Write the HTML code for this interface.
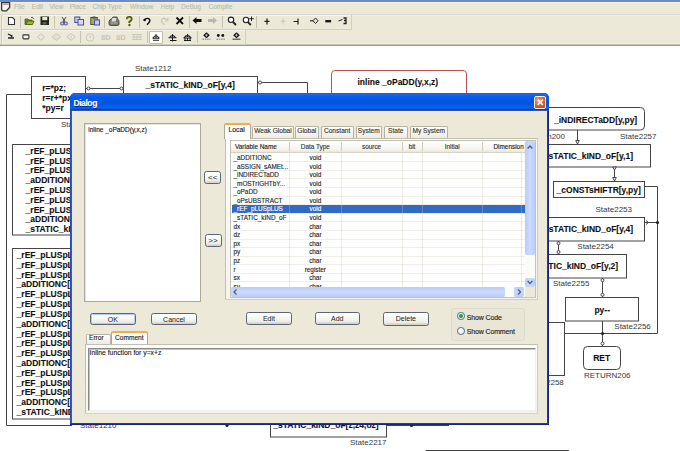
<!DOCTYPE html>
<html><head><meta charset="utf-8">
<style>
*{box-sizing:border-box;margin:0;padding:0}
html,body{width:680px;height:451px;overflow:hidden;background:#fff;font-family:"Liberation Sans",sans-serif}
.abs{position:absolute}
#chrome{position:absolute;left:0;top:0;width:680px;height:46px;background:#ECE9D8}
.t{position:absolute;white-space:nowrap;line-height:1;-webkit-text-stroke:0.12px currentColor}
</style></head><body>
<div id="chrome">
  <div class="abs" style="left:0;top:0;width:680px;height:2px;background:#6F8BC6"></div><div class="abs" style="left:0;top:2px;width:680px;height:1px;background:#F2F1EA"></div>
  <div class="abs" style="left:0;top:45px;width:680px;height:1px;background:#9C9A8C"></div>
  <div class="abs" style="left:0;top:44px;width:680px;height:1px;background:#C8C5B4"></div>
  <div class="t" style="left:14.1px;top:3.9px;font-size:6.5px;color:#BDBAAA">File</div>
  <div class="t" style="left:31.8px;top:3.9px;font-size:6.5px;color:#BDBAAA">Edit</div>
  <div class="t" style="left:49.4px;top:3.9px;font-size:6.5px;color:#BDBAAA">View</div>
  <div class="t" style="left:69.7px;top:3.9px;font-size:6.5px;color:#BDBAAA">Place</div>
  <div class="t" style="left:92.6px;top:3.9px;font-size:6.5px;color:#BDBAAA">Chip Type</div>
  <div class="t" style="left:130.0px;top:3.9px;font-size:6.5px;color:#BDBAAA">Window</div>
  <div class="t" style="left:160.7px;top:3.9px;font-size:6.5px;color:#BDBAAA">Help</div>
  <div class="t" style="left:181.1px;top:3.9px;font-size:6.5px;color:#BDBAAA">DeBug</div>
  <div class="t" style="left:208.5px;top:3.9px;font-size:6.5px;color:#BDBAAA">Compile</div>
  <svg class="abs" style="left:0;top:0" width="12" height="13"><path d="M1.6 2.6 H9.6 V7.5 L6.5 10.8 H2.5 L1.6 9.8 Z" fill="#F4F6F2" stroke="#2E3E3E" stroke-width="1.3"/><path d="M2.4 3.3 H8.8 V5 H2.4Z" fill="#D89A98"/></svg>
  <div class="abs" style="left:0;top:13.6px;width:680px;height:1.2px;background:#D9DACB"></div><div class="abs" style="left:0;top:14.8px;width:680px;height:0.8px;background:#F1F0E4"></div>
  <div class="abs" style="left:1.5px;top:14.5px;width:350.5px;height:15px;border-right:1px solid #D2CFC0;border-bottom:1px solid #D2CFC0;box-shadow:inset 1px 1px 0 #F6F4EC"></div>
  <div class="abs" style="left:1.5px;top:29.5px;width:244px;height:15px;border-right:1px solid #D2CFC0;border-bottom:1px solid #D2CFC0;box-shadow:inset 1px 1px 0 #F6F4EC"></div>
  <div class="abs" style="left:1px;top:14.5px;width:1px;height:30px;background:#C9C6B6"></div>
  <div class="abs" style="left:19.5px;top:16px;width:1px;height:12px;background:#C5C2B2"></div>
  <div class="abs" style="left:53.9px;top:16px;width:1px;height:12px;background:#C5C2B2"></div>
  <div class="abs" style="left:104.2px;top:16px;width:1px;height:12px;background:#C5C2B2"></div>
  <div class="abs" style="left:139.1px;top:16px;width:1px;height:12px;background:#C5C2B2"></div>
  <div class="abs" style="left:188.5px;top:16px;width:1px;height:12px;background:#C5C2B2"></div>
  <div class="abs" style="left:222.3px;top:16px;width:1px;height:12px;background:#C5C2B2"></div>
  <div class="abs" style="left:256.0px;top:16px;width:1px;height:12px;background:#C5C2B2"></div>
  <div class="abs" style="left:80.3px;top:31px;width:1px;height:12px;background:#C5C2B2"></div>
  <div class="abs" style="left:147.1px;top:31px;width:1px;height:12px;background:#C5C2B2"></div>
  <div class="abs" style="left:197.2px;top:31px;width:1px;height:12px;background:#C5C2B2"></div>
  <div class="abs" style="left:148.8px;top:31px;width:14px;height:13.2px;background:#FCFCF9;border:1px solid #C2BFAF;border-radius:1px"></div>
  <svg class="abs" style="left:6.5px;top:15.9px" width="9" height="10"><path d="M1.5 1.5 H5.5 L7.5 3.5 V8.5 H1.5 Z" fill="#fff" stroke="#333" stroke-width="1.1"/></svg>
  <svg class="abs" style="left:24.0px;top:15.9px" width="11" height="10"><path d="M1 3 H4 L5 4 H8 V8.5 H1Z" fill="#6F8A1C" stroke="#4A5A10" stroke-width="0.8"/><path d="M2 8.5 L3.5 5 H10 L8.5 8.5Z" fill="#9CB82A" stroke="#4A5A10" stroke-width="0.8"/><path d="M7 1.5 Q9 0.5 9.5 3" stroke="#333" fill="none" stroke-width="0.8"/></svg>
  <svg class="abs" style="left:40.0px;top:15.9px" width="10" height="10"><rect x="0.5" y="0.5" width="8.5" height="8.5" fill="#1E2416"/><rect x="2.3" y="1" width="5" height="3.2" fill="#E8E8D8"/><rect x="2.5" y="6" width="4" height="2.5" fill="#5A5A50"/></svg>
  <svg class="abs" style="left:60.0px;top:15.9px" width="8" height="10"><path d="M2 1 L5 6 M6 1 L3 6" stroke="#445" stroke-width="1"/><circle cx="2.2" cy="7.5" r="1.5" fill="none" stroke="#5A5A9A" stroke-width="1.2"/><circle cx="5.8" cy="7.5" r="1.5" fill="none" stroke="#5A5A9A" stroke-width="1.2"/></svg>
  <svg class="abs" style="left:74.0px;top:15.9px" width="11" height="10"><rect x="0.8" y="1" width="5" height="5.5" fill="#C8C8F0" stroke="#505098" stroke-width="1"/><rect x="4" y="3.5" width="5.5" height="5.5" fill="#D8D8F8" stroke="#505098" stroke-width="1"/></svg>
  <svg class="abs" style="left:89.5px;top:15.9px" width="11" height="10"><rect x="0.8" y="1.5" width="6.5" height="7" fill="#A8A878" stroke="#505030" stroke-width="1"/><rect x="2.5" y="0.5" width="3" height="2" fill="#505030"/><rect x="4.5" y="4" width="5" height="5" fill="#C8C8F0" stroke="#505098" stroke-width="1"/></svg>
  <svg class="abs" style="left:107.5px;top:15.9px" width="12" height="11"><path d="M1 6 Q1 3.5 3.5 3 L5 1 H9 L9.5 3 Q11 3.8 11 6 V8 Q11 9.5 9 9.5 H3 Q1 9.5 1 8Z" fill="#7A7A76" stroke="#454542" stroke-width="0.9"/><path d="M4.5 2 H8.5 L7.5 5.5 H3.5Z" fill="#E2E2DC"/><path d="M2.5 7 H9.5" stroke="#B8B8B2" stroke-width="0.8"/></svg>
  <svg class="abs" style="left:125px;top:15.9px" width="9" height="11"><path d="M1.8 3.2 Q1.8 0.9 4.2 0.9 Q6.8 0.9 6.6 3.2 Q6.4 4.8 4.4 5.6 V7" stroke="#5A6018" stroke-width="2" fill="none"/><circle cx="4.4" cy="9" r="1.2" fill="#5A6018"/><path d="M2.8 3 Q3 1.8 4.3 1.8 Q5.5 1.9 5.5 3" stroke="#C8C840" stroke-width="0.8" fill="none"/></svg>
  <svg class="abs" style="left:143.3px;top:16.6px" width="9" height="9"><circle cx="1.6" cy="3" r="1.3" fill="#111"/><path d="M1.8 2.6 Q4 0.6 6 1.8 Q7.6 3.2 6 5.5 L4 7.8" stroke="#111" stroke-width="1.4" fill="none"/></svg>
  <svg class="abs" style="left:159.5px;top:16.6px" width="9" height="9"><path d="M6.6 2.6 Q4.4 0.6 2.4 1.8 Q0.8 3.2 2.4 5.5 L4.4 7.8" stroke="#C2C0B4" stroke-width="1.1" fill="none"/><path d="M7.8 1 V4 H5" stroke="#C2C0B4" stroke-width="1" fill="none"/></svg>
  <svg class="abs" style="left:174.5px;top:16.4px" width="10" height="10"><path d="M1.5 1.5 L8 8 M8 1.5 L1.5 8" stroke="#111" stroke-width="1.8"/></svg>
  <svg class="abs" style="left:192.0px;top:16.4px" width="11" height="9"><path d="M0.5 4.5 L4.5 1 V3 H9.5 V6 H4.5 V8Z" fill="#111"/></svg>
  <svg class="abs" style="left:207.0px;top:16.4px" width="11" height="9"><path d="M10 4.5 L6 1 V3 H1 V6 H6 V8Z" fill="#B9B7AC"/></svg>
  <svg class="abs" style="left:226.5px;top:16.4px" width="11" height="10"><circle cx="4" cy="3.8" r="2.7" fill="#fff" stroke="#222" stroke-width="1.1"/><path d="M6 6 L9 9" stroke="#222" stroke-width="1.8"/></svg>
  <svg class="abs" style="left:241.5px;top:16.4px" width="12" height="10"><circle cx="4" cy="4" r="2.7" fill="#fff" stroke="#222" stroke-width="1.1"/><path d="M6 6.2 L8.8 9" stroke="#222" stroke-width="1.8"/><path d="M9.5 0.5 V5 M7.3 2.7 H11.7" stroke="#222" stroke-width="1"/></svg>
  <svg class="abs" style="left:263.5px;top:17.9px" width="6" height="7"><path d="M3 0.5 V6.5 M0.5 3.3 H5.5" stroke="#222" stroke-width="1.3"/></svg>
  <svg class="abs" style="left:279.5px;top:17.9px" width="6" height="7"><path d="M3 0.5 V6.5 M0.5 3.3 H5.5" stroke="#C8C6B8" stroke-width="1"/></svg>
  <svg class="abs" style="left:293.0px;top:17.9px" width="7" height="7"><path d="M5 0.5 V6.5 M0.5 3.5 H5" stroke="#222" stroke-width="1.2"/></svg>
  <svg class="abs" style="left:309.5px;top:17.4px" width="9" height="8"><path d="M0 3.8 H3" stroke="#222" stroke-width="1.1"/><path d="M5.5 1 L8 3.8 L5.5 6.5 L3 3.8Z" fill="none" stroke="#222" stroke-width="1"/></svg>
  <svg class="abs" style="left:325.0px;top:18.9px" width="7" height="5"><rect x="0.3" y="1" width="5.8" height="2.4" fill="#1a1a1a"/></svg>
  <svg class="abs" style="left:338.0px;top:17.4px" width="10" height="8"><path d="M0.5 4 L4.5 2.5" stroke="#222" stroke-width="1"/><path d="M5.5 1 H8 V3.5 H6 M8 3.5 V6.5 H5.5" stroke="#222" stroke-width="1.3" fill="none"/></svg>
  <svg class="abs" style="left:6.5px;top:32.5px" width="8" height="6"><path d="M1 1 L5 3 L4 4 M1 5 H7" stroke="#222" stroke-width="1.3" fill="none"/></svg>
  <svg class="abs" style="left:21.5px;top:33.5px" width="8" height="6"><rect x="0.9" y="0.9" width="6" height="4" rx="0.8" fill="#F4F3EE" stroke="#333" stroke-width="1.1"/></svg>
  <svg class="abs" style="left:37.0px;top:32.5px" width="8" height="8"><path d="M4 0.7 L7.3 4 L4 7.3 L0.7 4Z" fill="none" stroke="#C6C4B6" stroke-width="1"/></svg>
  <svg class="abs" style="left:51.0px;top:32.5px" width="11" height="8"><path d="M5.5 0.7 L9.8 4 L5.5 7.3 L1.2 4Z" fill="none" stroke="#C6C4B6" stroke-width="1"/><path d="M5.5 2 L7.5 4 L5.5 6 L3.5 4Z" fill="none" stroke="#D0CEC0" stroke-width="0.8"/></svg>
  <svg class="abs" style="left:66.0px;top:32.5px" width="10" height="8"><path d="M5 0.7 L9.3 4 L5 7.3 L0.7 4Z" fill="none" stroke="#C6C4B6" stroke-width="1"/><path d="M5 3 V5" stroke="#C6C4B6"/></svg>
  <svg class="abs" style="left:85.0px;top:32.5px" width="11" height="9"><circle cx="5" cy="4.5" r="3.8" fill="none" stroke="#CAC8BA" stroke-width="1"/><path d="M5 2.5 V4.5 H6.5" stroke="#CAC8BA" stroke-width="0.8" fill="none"/></svg>
  <svg class="abs" style="left:100.5px;top:33.0px" width="10" height="8"><text x="0" y="7" font-size="7.5" font-weight="bold" fill="#C6C4B6" font-family="Liberation Sans">8D</text></svg>
  <svg class="abs" style="left:116.0px;top:33.0px" width="10" height="8"><text x="0" y="7" font-size="7.5" font-weight="bold" fill="#C6C4B6" font-family="Liberation Sans">8D</text></svg>
  <svg class="abs" style="left:130.5px;top:33.0px" width="12" height="8"><path d="M1 1.5 H11 M1 4 H11 M1 6.5 H11 M3 1.5 V6.5 M6 1.5 V6.5 M9 1.5 V6.5" stroke="#CAC8BA" stroke-width="1"/></svg>
  <svg class="abs" style="left:152.0px;top:33.0px" width="9" height="9"><path d="M1 5 Q4 0.5 7 5" fill="none" stroke="#1a1a1a" stroke-width="1.2"/><path d="M4 1 V5" stroke="#1a1a1a" stroke-width="1"/><path d="M0.5 5.3 H7.5 M1 7.3 H7" stroke="#1a1a1a" stroke-width="1.1"/></svg>
  <svg class="abs" style="left:167.5px;top:33.0px" width="9" height="9"><path d="M1.5 4.5 Q4.5 0.5 7.5 4.5" fill="none" stroke="#1a1a1a" stroke-width="1.1"/><path d="M4.5 1 V8.5" stroke="#1a1a1a" stroke-width="1"/><path d="M0.5 4.8 H8.5 M2 7.5 H8.5" stroke="#1a1a1a" stroke-width="1.1"/></svg>
  <svg class="abs" style="left:182.5px;top:33.0px" width="9" height="9"><path d="M1 4.8 Q4.5 0.5 8 4.8" fill="none" stroke="#1a1a1a" stroke-width="1.1"/><path d="M4.5 1 V4" stroke="#1a1a1a"/><path d="M0.5 5 H8.5 M1 7.5 H8 M2 5 V7.5 M4.5 5 V7.5 M7 5 V7.5" stroke="#1a1a1a" stroke-width="1"/></svg>
  <svg class="abs" style="left:201.5px;top:32.0px" width="9" height="11"><path d="M4.5 0.2 L7.8 3.2 L4.5 6.2 L1.2 3.2Z" fill="#111"/><path d="M4.5 1.8 V4.6 M3.1 3.2 H5.9" stroke="#fff" stroke-width="0.6"/><path d="M0.5 7.2 H8.5" stroke="#555" stroke-width="0.8" stroke-dasharray="1.5 0.8"/></svg>
  <svg class="abs" style="left:216.0px;top:32.5px" width="10" height="9"><circle cx="2.3" cy="2.5" r="1.4" fill="#111"/><circle cx="6.8" cy="2.5" r="1.4" fill="#111"/><path d="M0.5 6.2 H9.5" stroke="#555" stroke-width="0.8" stroke-dasharray="1.5 0.8"/></svg>
  <svg class="abs" style="left:231.5px;top:32.0px" width="9" height="11"><path d="M4.5 0.2 L7.8 3.2 L4.5 6.2 L1.2 3.2Z" fill="#111"/><path d="M4.5 1.8 V4.6 M3.1 3.2 H5.9" stroke="#fff" stroke-width="0.6"/><path d="M0.5 7.2 H8.5" stroke="#444" stroke-width="1.1"/></svg>
</div>

<svg width="680" height="451" style="position:absolute;left:0;top:0" font-family="Liberation Sans">
<g fill="none" stroke="#454545" stroke-width="1">
<polyline points="6.5,425.5 6.5,94.5 31.5,94.5"/>
<line x1="6.5" y1="425.5" x2="72" y2="425.5"/>
<rect x="31.5" y="76.5" width="54" height="42"/>
<line x1="85.5" y1="88.5" x2="123.5" y2="88.5"/>
<rect x="123.5" y="76.5" width="134" height="30"/>
<polyline points="257.5,82.5 307.5,82.5 307.5,95"/>
<rect x="12.5" y="144.5" width="70" height="90.5"/>
<rect x="12.5" y="248.5" width="70" height="170.5"/>
</g>
<rect x="331.5" y="70.5" width="135" height="40" rx="3.5" fill="none" stroke="#C0504D"/>
<g fill="none" stroke="#454545" stroke-width="1">
<rect x="520.5" y="107.5" width="124" height="22.5" rx="4"/>
<line x1="577.5" y1="130" x2="577.5" y2="144"/>
<rect x="520.5" y="144.5" width="130" height="22.5"/>
<line x1="614.5" y1="167" x2="614.5" y2="181"/>
<rect x="553.5" y="181.5" width="91" height="16"/>
<polyline points="644.5,186.5 657.5,186.5 657.5,333.5 564.5,333.5"/>
<rect x="520.5" y="217.5" width="124" height="23.5"/>
<line x1="644.5" y1="222.5" x2="657.5" y2="222.5"/>
<line x1="558.5" y1="241" x2="558.5" y2="254.5"/>
<rect x="520.5" y="254.5" width="106" height="23.5"/>
<line x1="602.5" y1="278" x2="602.5" y2="297.5"/>
<rect x="565.5" y="297.5" width="73" height="23.5"/>
<line x1="602.5" y1="321" x2="602.5" y2="346.5"/>
<rect x="520.5" y="322.5" width="44" height="53"/>
<rect x="583.5" y="346.5" width="37" height="23" rx="4"/>
<rect x="270.5" y="410.5" width="116" height="26.5"/>
<line x1="425.5" y1="450.5" x2="569" y2="450.5"/>
<line x1="386.5" y1="425.2" x2="449" y2="425.2" stroke="#2E3C8C" stroke-width="1.6"/>
<path d="M575.7 140.5 L579.3 140.5 L577.5 144.0 Z" fill="#fff"/>
<path d="M612.7 177.5 L616.3 177.5 L614.5 181.0 Z" fill="#fff"/>
<path d="M612.7 167.0 L616.3 167.0 L614.5 170.0 Z" fill="#fff"/>
<circle cx="558.5" cy="243.2" r="1.5" fill="#fff"/>
<circle cx="558.5" cy="252.0" r="1.5" fill="#fff"/>
<circle cx="602.5" cy="280.2" r="1.5" fill="#fff"/>
<circle cx="602.5" cy="294.8" r="1.5" fill="#fff"/>
<circle cx="602.5" cy="343.5" r="1.5" fill="#fff"/>
<circle cx="88.5" cy="88.5" r="1.5" fill="#fff"/>
<circle cx="121.5" cy="88.5" r="1.5" fill="#fff"/>
<circle cx="260.0" cy="82.5" r="1.5" fill="#fff"/>
<path d="M646 220.5 L648.5 222.5 L646 224.5"/>
</g>
<g fill="#222">
<circle cx="657.5" cy="222.5" r="1.6"/>
<circle cx="602.5" cy="333.5" r="1.6"/>
<circle cx="411.5" cy="425.5" r="1.6"/>
<circle cx="227.0" cy="425.5" r="1.6"/>
</g>
<g font-size="8" fill="#383838">
<text x="135.0" y="71.0">State1212</text>
<text x="61.0" y="127.0">State1211</text>
<text x="620.0" y="138.5">State2257</text>
<text x="565" y="138.5" text-anchor="end">Station200</text>
<text x="595.5" y="212.3">State2253</text>
<text x="577.3" y="249.4">State2254</text>
<text x="552.9" y="286.2">State2255</text>
<text x="614.3" y="329.0">State2256</text>
<text x="563.8" y="384.5" text-anchor="end">State2258</text>
<text x="583.9" y="378.0">RETURN206</text>
<text x="350.0" y="445.3">State2217</text>
<text x="80.0" y="427.6">State1210</text>
</g>
<g font-size="8.5" font-weight="bold" fill="#111" stroke="#111" stroke-width="0.1">
<text x="42.2" y="90.6">r=*pz;</text>
<text x="42.2" y="100.6">r=r+*px</text>
<text x="42.2" y="110.6">*py=r</text>
<text x="145.5" y="88.0">_sTATIC_kIND_oF[y,4]</text>
<text x="357.5" y="85.0">inline _oPaDD(y,x,z)</text>
<text x="637.2" y="123.0" text-anchor="end">_iNDIRECTaDD[y,py]</text>
<text x="633.0" y="159.0" text-anchor="end">_sTATIC_kIND_oF[y,1]</text>
<text x="556.6" y="193.0">_cONSTsHIFTR[y,py]</text>
<text x="633.2" y="232.4" text-anchor="end">_sTATIC_kIND_oF[y,4]</text>
<text x="618.1" y="269.4" text-anchor="end">_sTATIC_kIND_oF[y,2]</text>
<text x="594.4" y="313.0">py--</text>
<text x="593.2" y="361.0">RET</text>
<text x="273.2" y="427.7">_sTATIC_kIND_oF[z,z4,oz]</text>
<text x="25.6" y="153.7">_rEF_pLUS</text>
<text x="25.6" y="163.5">_rEF_pLUS</text>
<text x="25.6" y="173.3">_rEF_pLUS</text>
<text x="25.6" y="183.1">_aDDITION</text>
<text x="25.6" y="192.9">_rEF_pLUS</text>
<text x="25.6" y="202.7">_rEF_pLUS</text>
<text x="25.6" y="212.5">_rEF_pLUS</text>
<text x="25.6" y="222.3">_aDDITION</text>
<text x="25.6" y="232.1">_sTATIC_kI</text>
<text x="16.6" y="258.0">_rEF_pLUSpL</text>
<text x="16.6" y="267.8">_rEF_pLUSpL</text>
<text x="16.6" y="277.6">_rEF_pLUSpL</text>
<text x="16.6" y="287.4">_aDDITIONC[</text>
<text x="16.6" y="297.2">_rEF_pLUSpL</text>
<text x="16.6" y="307.1">_rEF_pLUSpL</text>
<text x="16.6" y="316.9">_rEF_pLUSpL</text>
<text x="16.6" y="326.7">_aDDITIONC[</text>
<text x="16.6" y="336.5">_rEF_pLUSpL</text>
<text x="16.6" y="346.3">_rEF_pLUSpL</text>
<text x="16.6" y="356.1">_rEF_pLUSpL</text>
<text x="16.6" y="365.9">_aDDITIONC[</text>
<text x="16.6" y="375.7">_rEF_pLUSpL</text>
<text x="16.6" y="385.5">_rEF_pLUSpL</text>
<text x="16.6" y="395.3">_rEF_pLUSpL</text>
<text x="16.6" y="405.1">_aDDITIONC[</text>
<text x="16.6" y="415.0">_sTATIC_kIND</text>
</g>
</svg>
<div class="abs" style="left:69.50px;top:93.00px;width:479.50px;height:332.00px;background:#1844C0;border-radius:5px 5px 0 0"></div>
<div class="abs" style="left:69.50px;top:93.00px;width:479.50px;height:18.00px;border-radius:5px 5px 0 0;background:linear-gradient(#2A58B8 0px,#1A66EE 1.5px,#0A5EEC 3px,#0054DE 9px,#0058E4 11px,#0664F2 15px,#0A5AE0 15.6px,#1A3C90 16.4px,#1A3C90 17.4px,#C8D6EE 18px)"></div>
<div class="abs" style="left:69.50px;top:111.00px;width:2.50px;height:314.00px;background:linear-gradient(90deg,#1A46C0,#2E62DA)"></div>
<div class="abs" style="left:546.50px;top:111.00px;width:2.50px;height:314.00px;background:linear-gradient(90deg,#3A5CC8,#14248A 40%,#14248A)"></div>
<div class="abs" style="left:69.50px;top:422.50px;width:479.50px;height:2.50px;background:linear-gradient(#3A5CC8,#14248A 40%,#14248A)"></div>
<div class="t" style="left:73.40px;top:99.30px;font-size:8.6px;color:#fff;font-weight:bold;letter-spacing:-0.45px;text-shadow:0.7px 0.7px 0 #0A2080">Dialog</div>
<div class="abs" style="left:533.50px;top:96.20px;width:12.50px;height:12.50px;border:1px solid #F4F4F4;border-radius:2px;background:radial-gradient(circle at 35% 30%,#F2A080,#DE5A30 55%,#C04418)"></div>
<svg class="abs" style="left:533.5px;top:96.2px" width="13" height="13"><path d="M3.6 3.6 L8.9 8.9 M8.9 3.6 L3.6 8.9" stroke="#fff" stroke-width="1.5"/></svg>
<div class="abs" style="left:72.00px;top:111.00px;width:474.50px;height:311.50px;background:linear-gradient(#E4ECF2 0px,#ECE9D8 1.2px)"></div>
<div class="abs" style="left:83.70px;top:123.00px;width:117.00px;height:179.00px;background:#fff;border:1px solid #ABA99C;box-shadow:inset 1px 1px 0 #E6E4DC"></div>
<div class="t" style="left:88.20px;top:126.90px;font-size:6.5px;color:#111;">inline _oPaDD(y,x,z)</div>
<div class="abs" style="left:204.20px;top:171.40px;width:17.00px;height:12.80px;border:1px solid #5C6678;border-radius:2.5px;background:linear-gradient(#FFFFFF,#F3F3EE 60%,#E6E4DA);box-shadow:inset 0 -1.5px 0 #D8D2C6;font-size:8px;color:#1a1a1a;text-align:center;line-height:11.6px;white-space:nowrap">&lt;&lt;</div>
<div class="abs" style="left:204.50px;top:234.00px;width:17.00px;height:12.80px;border:1px solid #5C6678;border-radius:2.5px;background:linear-gradient(#FFFFFF,#F3F3EE 60%,#E6E4DA);box-shadow:inset 0 -1.5px 0 #D8D2C6;font-size:8px;color:#1a1a1a;text-align:center;line-height:11.6px;white-space:nowrap">&gt;&gt;</div>
<div class="abs" style="left:90.00px;top:312.50px;width:45.50px;height:12.80px;border:1px solid #5C6678;border-radius:2.5px;background:linear-gradient(#FFFFFF,#F3F3EE 60%,#E6E4DA);box-shadow:inset 0 0 0 1px #B4CCF2,inset 0 -1px 0 #9DB9EB;font-size:7px;color:#1a1a1a;text-align:center;line-height:11.6px;white-space:nowrap">OK</div>
<div class="abs" style="left:151.40px;top:312.50px;width:45.20px;height:12.80px;border:1px solid #5C6678;border-radius:2.5px;background:linear-gradient(#FFFFFF,#F3F3EE 60%,#E6E4DA);box-shadow:inset 0 -1.5px 0 #D8D2C6;font-size:7px;color:#1a1a1a;text-align:center;line-height:11.6px;white-space:nowrap">Cancel</div>
<div class="abs" style="left:246.20px;top:311.80px;width:45.60px;height:13.40px;border:1px solid #5C6678;border-radius:2.5px;background:linear-gradient(#FFFFFF,#F3F3EE 60%,#E6E4DA);box-shadow:inset 0 -1.5px 0 #D8D2C6;font-size:7px;color:#1a1a1a;text-align:center;line-height:12.2px;white-space:nowrap">Edit</div>
<div class="abs" style="left:314.50px;top:311.80px;width:45.60px;height:13.40px;border:1px solid #5C6678;border-radius:2.5px;background:linear-gradient(#FFFFFF,#F3F3EE 60%,#E6E4DA);box-shadow:inset 0 -1.5px 0 #D8D2C6;font-size:7px;color:#1a1a1a;text-align:center;line-height:12.2px;white-space:nowrap">Add</div>
<div class="abs" style="left:383.00px;top:312.00px;width:45.80px;height:13.60px;border:1px solid #5C6678;border-radius:2.5px;background:linear-gradient(#FFFFFF,#F3F3EE 60%,#E6E4DA);box-shadow:inset 0 -1.5px 0 #D8D2C6;font-size:7px;color:#1a1a1a;text-align:center;line-height:12.4px;white-space:nowrap">Delete</div>
<div class="abs" style="left:450.50px;top:307.50px;width:74.50px;height:33.00px;border:1px solid #DEDBCB;border-radius:3px;background:#E9E6D5"></div>
<div class="abs" style="left:457.45px;top:312.45px;width:7.60px;height:7.60px;border-radius:50%;border:1px solid #46708E;background:radial-gradient(circle at 40% 40%,#FFFFFF,#DCDCEA)"></div>
<div class="abs" style="left:459.45px;top:314.45px;width:3.60px;height:3.60px;border-radius:50%;background:#3A9A3A"></div>
<div class="t" style="left:466.80px;top:313.75px;font-size:7px;color:#1a1a1a;letter-spacing:-0.15px">Show Code</div>
<div class="abs" style="left:457.45px;top:326.95px;width:7.60px;height:7.60px;border-radius:50%;border:1px solid #46708E;background:radial-gradient(circle at 40% 40%,#FFFFFF,#DCDCEA)"></div>
<div class="t" style="left:466.80px;top:328.25px;font-size:7px;color:#1a1a1a;letter-spacing:-0.15px">Show Comment</div>
<div class="abs" style="left:224.50px;top:137.50px;width:313.50px;height:162.50px;border:1px solid #C2BFB0;border-bottom-color:#D0CDBE;border-right-color:#D0CDBE;background:linear-gradient(#FCFCFE,#F4F3EE)"></div>
<div class="abs" style="left:224.00px;top:123.00px;width:27.20px;height:15.50px;border:1px solid #ABA99C;border-bottom:none;border-top:2px solid #F0B048;border-radius:2px 2px 0 0;background:#FCFCFE"></div>
<div class="t" style="left:228.50px;top:126.60px;font-size:6.8px;color:#1a1a1a;">Local</div>
<div class="abs" style="left:252.30px;top:125.60px;width:41.30px;height:12.20px;border:1px solid #B5B3A6;border-bottom:none;border-radius:2px 2px 0 0;background:linear-gradient(#FFFFFF,#ECEBE4)"></div>
<div class="t" style="left:252.30px;top:127.9px;width:41.30px;text-align:center;font-size:6.6px;color:#333">Weak Global</div>
<div class="abs" style="left:294.90px;top:125.60px;width:23.80px;height:12.20px;border:1px solid #B5B3A6;border-bottom:none;border-radius:2px 2px 0 0;background:linear-gradient(#FFFFFF,#ECEBE4)"></div>
<div class="t" style="left:294.90px;top:127.9px;width:23.80px;text-align:center;font-size:6.6px;color:#333">Global</div>
<div class="abs" style="left:320.60px;top:125.60px;width:33.10px;height:12.20px;border:1px solid #B5B3A6;border-bottom:none;border-radius:2px 2px 0 0;background:linear-gradient(#FFFFFF,#ECEBE4)"></div>
<div class="t" style="left:320.60px;top:127.9px;width:33.10px;text-align:center;font-size:6.6px;color:#333">Constant</div>
<div class="abs" style="left:355.50px;top:125.60px;width:26.50px;height:12.20px;border:1px solid #B5B3A6;border-bottom:none;border-radius:2px 2px 0 0;background:linear-gradient(#FFFFFF,#ECEBE4)"></div>
<div class="t" style="left:355.50px;top:127.9px;width:26.50px;text-align:center;font-size:6.6px;color:#333">System</div>
<div class="abs" style="left:383.50px;top:125.60px;width:24.50px;height:12.20px;border:1px solid #B5B3A6;border-bottom:none;border-radius:2px 2px 0 0;background:linear-gradient(#FFFFFF,#ECEBE4)"></div>
<div class="t" style="left:383.50px;top:127.9px;width:24.50px;text-align:center;font-size:6.6px;color:#333">State</div>
<div class="abs" style="left:410.00px;top:125.60px;width:37.50px;height:12.20px;border:1px solid #B5B3A6;border-bottom:none;border-radius:2px 2px 0 0;background:linear-gradient(#FFFFFF,#ECEBE4)"></div>
<div class="t" style="left:410.00px;top:127.9px;width:37.50px;text-align:center;font-size:6.6px;color:#333">My System</div>
<div class="abs" style="left:229.50px;top:139.50px;width:306.50px;height:158.50px;border:1px solid #C4C2B4;background:#fff"></div>
<div class="abs" style="left:230.50px;top:140.50px;width:294.00px;height:12.00px;background:linear-gradient(#FFFFFF,#F5F4EE 70%,#E4E1D4)"></div>
<div class="abs" style="left:230.50px;top:152.00px;width:294.00px;height:1.00px;background:#D8D4C4"></div>
<div class="abs" style="left:289.00px;top:142.00px;width:1.00px;height:9.00px;background:#CDCAB8"></div>
<div class="abs" style="left:340.70px;top:142.00px;width:1.00px;height:9.00px;background:#CDCAB8"></div>
<div class="abs" style="left:401.50px;top:142.00px;width:1.00px;height:9.00px;background:#CDCAB8"></div>
<div class="abs" style="left:421.50px;top:142.00px;width:1.00px;height:9.00px;background:#CDCAB8"></div>
<div class="abs" style="left:482.00px;top:142.00px;width:1.00px;height:9.00px;background:#CDCAB8"></div>
<div class="t" style="left:235.00px;top:144.00px;font-size:6.4px;color:#1a1a1a;">Variable Name</div>
<div class="t" style="left:289.50px;top:144px;width:51.70px;text-align:center;font-size:6.4px;color:#333">Data Type</div>
<div class="t" style="left:341.20px;top:144px;width:60.80px;text-align:center;font-size:6.4px;color:#333">source</div>
<div class="t" style="left:402.00px;top:144px;width:20.00px;text-align:center;font-size:6.4px;color:#333">bit</div>
<div class="t" style="left:422.00px;top:144px;width:60.50px;text-align:center;font-size:6.4px;color:#333">Initial</div>
<div class="t" style="left:493.50px;top:144.00px;font-size:6.4px;color:#1a1a1a;">Dimension</div>
<div class="abs" style="left:230.50px;top:153px;width:294.50px;height:134.00px;overflow:hidden">
<div class="abs" style="left:0.00px;top:8.29px;width:300.00px;height:1.00px;background:#F0EEE8"></div>
<div class="t" style="left:3.00px;top:2.00px;font-size:6.4px;color:#1a1a1a;">_aDDITIONC</div>
<div class="t" style="left:59.00px;top:2.00px;width:51.7px;text-align:center;font-size:6.4px;color:#1a1a1a">void</div>
<div class="abs" style="left:0.00px;top:16.87px;width:300.00px;height:1.00px;background:#F0EEE8"></div>
<div class="t" style="left:3.00px;top:10.58px;font-size:6.4px;color:#1a1a1a;">_aSSIGN_sAMEt...</div>
<div class="t" style="left:59.00px;top:10.58px;width:51.7px;text-align:center;font-size:6.4px;color:#1a1a1a">void</div>
<div class="abs" style="left:0.00px;top:25.45px;width:300.00px;height:1.00px;background:#F0EEE8"></div>
<div class="t" style="left:3.00px;top:19.16px;font-size:6.4px;color:#1a1a1a;">_iNDIRECTaDD</div>
<div class="t" style="left:59.00px;top:19.16px;width:51.7px;text-align:center;font-size:6.4px;color:#1a1a1a">void</div>
<div class="abs" style="left:0.00px;top:34.03px;width:300.00px;height:1.00px;background:#F0EEE8"></div>
<div class="t" style="left:3.00px;top:27.74px;font-size:6.4px;color:#1a1a1a;">_mOSTrIGHTbY...</div>
<div class="t" style="left:59.00px;top:27.74px;width:51.7px;text-align:center;font-size:6.4px;color:#1a1a1a">void</div>
<div class="abs" style="left:0.00px;top:42.61px;width:300.00px;height:1.00px;background:#F0EEE8"></div>
<div class="t" style="left:3.00px;top:36.32px;font-size:6.4px;color:#1a1a1a;">_oPaDD</div>
<div class="t" style="left:59.00px;top:36.32px;width:51.7px;text-align:center;font-size:6.4px;color:#1a1a1a">void</div>
<div class="abs" style="left:0.00px;top:51.19px;width:300.00px;height:1.00px;background:#F0EEE8"></div>
<div class="t" style="left:3.00px;top:44.90px;font-size:6.4px;color:#1a1a1a;">_oPsUBSTRACT</div>
<div class="t" style="left:59.00px;top:44.90px;width:51.7px;text-align:center;font-size:6.4px;color:#1a1a1a">void</div>
<div class="abs" style="left:1.50px;top:51.70px;width:292.50px;height:8.40px;background:#316AC5"></div>
<div class="abs" style="left:0.00px;top:59.77px;width:300.00px;height:1.00px;background:#F0EEE8"></div>
<div class="t" style="left:3.00px;top:53.48px;font-size:6.4px;color:#fff;">_rEF_pLUSpLUS</div>
<div class="t" style="left:59.00px;top:53.48px;width:51.7px;text-align:center;font-size:6.4px;color:#fff">void</div>
<div class="abs" style="left:0.00px;top:68.35px;width:300.00px;height:1.00px;background:#F0EEE8"></div>
<div class="t" style="left:3.00px;top:62.06px;font-size:6.4px;color:#1a1a1a;">_sTATIC_kIND_oF</div>
<div class="t" style="left:59.00px;top:62.06px;width:51.7px;text-align:center;font-size:6.4px;color:#1a1a1a">void</div>
<div class="abs" style="left:0.00px;top:76.93px;width:300.00px;height:1.00px;background:#F0EEE8"></div>
<div class="t" style="left:3.00px;top:70.64px;font-size:6.4px;color:#1a1a1a;">dx</div>
<div class="t" style="left:59.00px;top:70.64px;width:51.7px;text-align:center;font-size:6.4px;color:#1a1a1a">char</div>
<div class="abs" style="left:0.00px;top:85.51px;width:300.00px;height:1.00px;background:#F0EEE8"></div>
<div class="t" style="left:3.00px;top:79.22px;font-size:6.4px;color:#1a1a1a;">dz</div>
<div class="t" style="left:59.00px;top:79.22px;width:51.7px;text-align:center;font-size:6.4px;color:#1a1a1a">char</div>
<div class="abs" style="left:0.00px;top:94.09px;width:300.00px;height:1.00px;background:#F0EEE8"></div>
<div class="t" style="left:3.00px;top:87.80px;font-size:6.4px;color:#1a1a1a;">px</div>
<div class="t" style="left:59.00px;top:87.80px;width:51.7px;text-align:center;font-size:6.4px;color:#1a1a1a">char</div>
<div class="abs" style="left:0.00px;top:102.67px;width:300.00px;height:1.00px;background:#F0EEE8"></div>
<div class="t" style="left:3.00px;top:96.38px;font-size:6.4px;color:#1a1a1a;">py</div>
<div class="t" style="left:59.00px;top:96.38px;width:51.7px;text-align:center;font-size:6.4px;color:#1a1a1a">char</div>
<div class="abs" style="left:0.00px;top:111.25px;width:300.00px;height:1.00px;background:#F0EEE8"></div>
<div class="t" style="left:3.00px;top:104.96px;font-size:6.4px;color:#1a1a1a;">pz</div>
<div class="t" style="left:59.00px;top:104.96px;width:51.7px;text-align:center;font-size:6.4px;color:#1a1a1a">char</div>
<div class="abs" style="left:0.00px;top:119.83px;width:300.00px;height:1.00px;background:#F0EEE8"></div>
<div class="t" style="left:3.00px;top:113.54px;font-size:6.4px;color:#1a1a1a;">r</div>
<div class="t" style="left:59.00px;top:113.54px;width:51.7px;text-align:center;font-size:6.4px;color:#1a1a1a">register</div>
<div class="abs" style="left:0.00px;top:128.41px;width:300.00px;height:1.00px;background:#F0EEE8"></div>
<div class="t" style="left:3.00px;top:122.12px;font-size:6.4px;color:#1a1a1a;">sx</div>
<div class="t" style="left:59.00px;top:122.12px;width:51.7px;text-align:center;font-size:6.4px;color:#1a1a1a">char</div>
<div class="abs" style="left:0.00px;top:136.99px;width:300.00px;height:1.00px;background:#F0EEE8"></div>
<div class="t" style="left:3.00px;top:130.70px;font-size:6.4px;color:#1a1a1a;">sy</div>
<div class="t" style="left:59.00px;top:130.70px;width:51.7px;text-align:center;font-size:6.4px;color:#1a1a1a">char</div>
<div class="abs" style="left:58.50px;top:0.00px;width:1.00px;height:140.00px;background:rgba(200,196,180,0.35)"></div>
<div class="abs" style="left:110.20px;top:0.00px;width:1.00px;height:140.00px;background:rgba(200,196,180,0.35)"></div>
<div class="abs" style="left:171.00px;top:0.00px;width:1.00px;height:140.00px;background:rgba(200,196,180,0.35)"></div>
<div class="abs" style="left:191.00px;top:0.00px;width:1.00px;height:140.00px;background:rgba(200,196,180,0.35)"></div>
<div class="abs" style="left:251.50px;top:0.00px;width:1.00px;height:140.00px;background:rgba(200,196,180,0.35)"></div>
<div class="abs" style="left:290.50px;top:0.00px;width:1.00px;height:140.00px;background:rgba(200,196,180,0.35)"></div>
</div>
<div class="abs" style="left:525.00px;top:140.50px;width:10.00px;height:147.00px;background:#FBFBF8"></div>
<div class="abs" style="left:525.00px;top:140.50px;width:10.00px;height:114.00px;border-radius:2px;background:linear-gradient(90deg,#B9CCF6,#CCDBFC 50%,#B9CCF6)"></div>
<svg class="abs" style="left:525px;top:142.5px" width="10" height="8"><path d="M2.6 5.5 L5 3 L7.4 5.5" stroke="#4D6185" stroke-width="1.4" fill="none"/></svg>
<div class="abs" style="left:525.00px;top:277.50px;width:10.00px;height:9.00px;border-radius:2px;background:linear-gradient(90deg,#B9CCF6,#CCDBFC 50%,#B9CCF6)"></div>
<svg class="abs" style="left:525px;top:278px" width="10" height="8"><path d="M2.6 3 L5 5.5 L7.4 3" stroke="#4D6185" stroke-width="1.4" fill="none"/></svg>
<div class="abs" style="left:230.50px;top:287.00px;width:294.50px;height:10.00px;background:#FBFBF8"></div>
<div class="abs" style="left:230.50px;top:287.00px;width:274.00px;height:10.00px;border-radius:2px;background:linear-gradient(#B9CCF6,#CCDBFC 50%,#B9CCF6)"></div>
<div class="abs" style="left:514.40px;top:287.00px;width:10.00px;height:10.00px;border-radius:2px;background:linear-gradient(#B9CCF6,#CCDBFC 50%,#B9CCF6)"></div>
<svg class="abs" style="left:230.50px;top:287px" width="10" height="10"><path d="M5.5 2.5 L3 5 L5.5 7.5" stroke="#4D6185" stroke-width="1.4" fill="none"/></svg>
<svg class="abs" style="left:514.4px;top:287px" width="10" height="10"><path d="M4 2.5 L6.5 5 L4 7.5" stroke="#4D6185" stroke-width="1.4" fill="none"/></svg>
<div class="abs" style="left:525.00px;top:287.00px;width:10.00px;height:10.00px;background:#ECE9D8"></div>
<div class="abs" style="left:85.00px;top:343.50px;width:453.00px;height:70.50px;border:1px solid #C2BFB0;border-bottom-color:#D6D3C4;border-right-color:#D0CDBE;background:linear-gradient(#FCFCFE,#F4F3EE)"></div>
<div class="abs" style="left:86.00px;top:334.00px;width:24.50px;height:10.00px;border:1px solid #B5B3A6;border-bottom:none;border-radius:2px 2px 0 0;background:linear-gradient(#FFFFFF,#ECEBE4)"></div>
<div class="t" style="left:89.00px;top:335.20px;font-size:6.6px;color:#1a1a1a;">Error</div>
<div class="abs" style="left:111.00px;top:331.00px;width:36.60px;height:13.00px;border:1px solid #ABA99C;border-bottom:none;border-top:2px solid #F0B048;border-radius:2px 2px 0 0;background:#FCFCFE"></div>
<div class="t" style="left:115.00px;top:335.00px;font-size:6.6px;color:#1a1a1a;">Comment</div>
<div class="abs" style="left:88.30px;top:348.00px;width:447.30px;height:63.00px;border:1px solid #8A897E;border-right-color:#F0F0EA;border-bottom-color:#F0F0EA;box-shadow:inset 1px 1px 0 #C8C6BA;background:#fff"></div>
<div class="t" style="left:89.60px;top:349.60px;font-size:6.8px;color:#1a1a1a;">Inline function for y=x+z</div>
</body></html>
